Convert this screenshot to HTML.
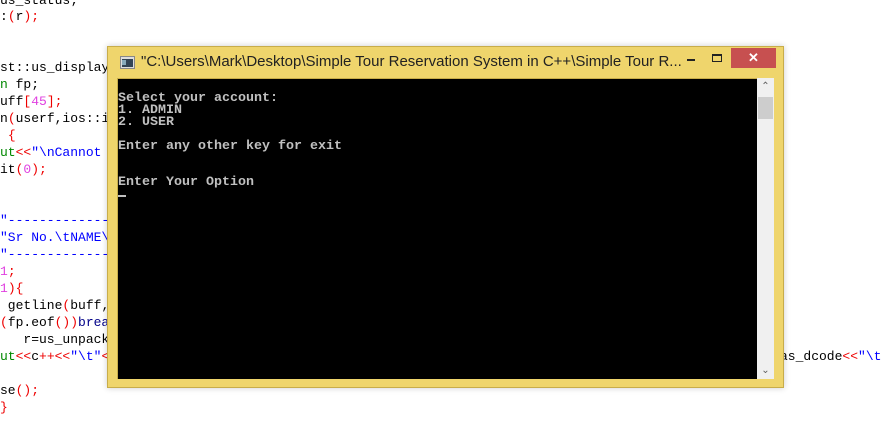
<!DOCTYPE html>
<html><head><style>
body{margin:0;width:884px;height:443px;background:#fff;position:relative;overflow:hidden;font-family:"Liberation Mono",monospace}
.code{position:absolute;left:0;font-size:13px;white-space:pre;color:#000;line-height:17px}
.g{color:#080}.r{color:#e00}.m{color:#e040e0}.b{color:#00f}.k{color:#008}
#win{position:absolute;left:107px;top:46px;width:677px;height:342px;background:#efd56c;border:1px solid #c8ad4a;box-sizing:border-box;box-shadow:0 0 6px rgba(0,0,0,.2)}
#title{position:absolute;left:33px;top:6px;font:15px "Liberation Sans",sans-serif;color:#222;white-space:nowrap}
#con{position:absolute;left:9px;top:31px;width:640px;height:301px;box-sizing:border-box;padding-top:14px;background:#000;color:#c0c0c0;font:bold 13.33px/12px "Liberation Mono",monospace;white-space:pre;border-left:1px solid #c8ad4a;border-top:1px solid #c8ad4a;overflow:hidden}
#sb{position:absolute;left:649px;top:31px;width:17px;height:301px;background:#f0f0f0}
</style></head><body>
<div class="code" style="top:-8px">us_status;</div>
<div class="code" style="top:8px"><span>:</span><span class="r">(</span>r<span class="r">);</span></div>
<div class="code" style="top:59px">st::us_display</div>
<div class="code" style="top:76px"><span class="g">n</span> fp;</div>
<div class="code" style="top:93px">uff<span class="r">[</span><span class="m">45</span><span class="r">];</span></div>
<div class="code" style="top:110px">n<span class="r">(</span>userf,ios::i</div>
<div class="code" style="top:127px"> <span class="r">{</span></div>
<div class="code" style="top:144px"><span class="g">ut</span><span class="r">&lt;&lt;</span><span class="b">"\nCannot</span></div>
<div class="code" style="top:161px">it<span class="r">(</span><span class="m">0</span><span class="r">);</span></div>
<div class="code b" style="top:212px">"-------------</div>
<div class="code b" style="top:229px">"Sr No.\tNAME\</div>
<div class="code b" style="top:246px">"-------------</div>
<div class="code" style="top:263px"><span class="m">1</span><span class="r">;</span></div>
<div class="code" style="top:280px"><span class="m">1</span><span class="r">){</span></div>
<div class="code" style="top:297px"> getline<span class="r">(</span>buff,</div>
<div class="code" style="top:314px"><span class="r">(</span>fp.eof<span class="r">())</span><span class="k">brea</span></div>
<div class="code" style="top:331px">   r=us_unpack<span class="r">(</span></div>
<div class="code" style="top:348px"><span class="g">ut</span><span class="r">&lt;&lt;</span>c<span class="r">++&lt;&lt;</span><span class="b">"\t"</span><span class="r">&lt;</span></div>
<div class="code" style="top:348px;left:780px">as_dcode<span class="r">&lt;&lt;</span><span class="b">"\t</span></div>
<div class="code" style="top:382px">se<span class="r">();</span></div>
<div class="code r" style="top:399px">}</div>
<div id="win">
 <svg style="position:absolute;left:12px;top:9px" width="15" height="13"><rect x="0.5" y="0.5" width="14" height="12" fill="#ddd" stroke="#888"/><rect x="2" y="3" width="11" height="8" fill="#345"/><rect x="2" y="4" width="4" height="5" fill="#8ab"/></svg>
 <div id="title">"C:\Users\Mark\Desktop\Simple Tour Reservation System in C++\Simple Tour R...</div>
 <div style="position:absolute;left:579px;top:12px;width:8px;height:2px;background:#222"></div>
 <div style="position:absolute;left:604px;top:7px;width:8px;height:5px;border:1.5px solid #222;border-top-width:2.5px"></div>
 <div style="position:absolute;left:623px;top:1px;width:45px;height:20px;background:#c75050;color:#fff;font:bold 13px/20px 'Liberation Sans',sans-serif;text-align:center">✕</div>
 <div id="con">Select your account:
1. ADMIN
2. USER

Enter any other key for exit


Enter Your Option
<span style="display:inline-block;width:8px;height:2px;background:#c0c0c0;vertical-align:top;margin-top:6px"></span></div>
 <div id="sb">
  <div style="position:absolute;top:3px;left:0;width:17px;text-align:center;font:10px 'Liberation Sans';color:#606060">⌃</div>
  <div style="position:absolute;top:19px;left:1px;width:15px;height:22px;background:#cdcdcd"></div>
  <div style="position:absolute;bottom:3px;left:0;width:17px;text-align:center;font:10px 'Liberation Sans';color:#606060">⌄</div>
 </div>
</div>
</body></html>
